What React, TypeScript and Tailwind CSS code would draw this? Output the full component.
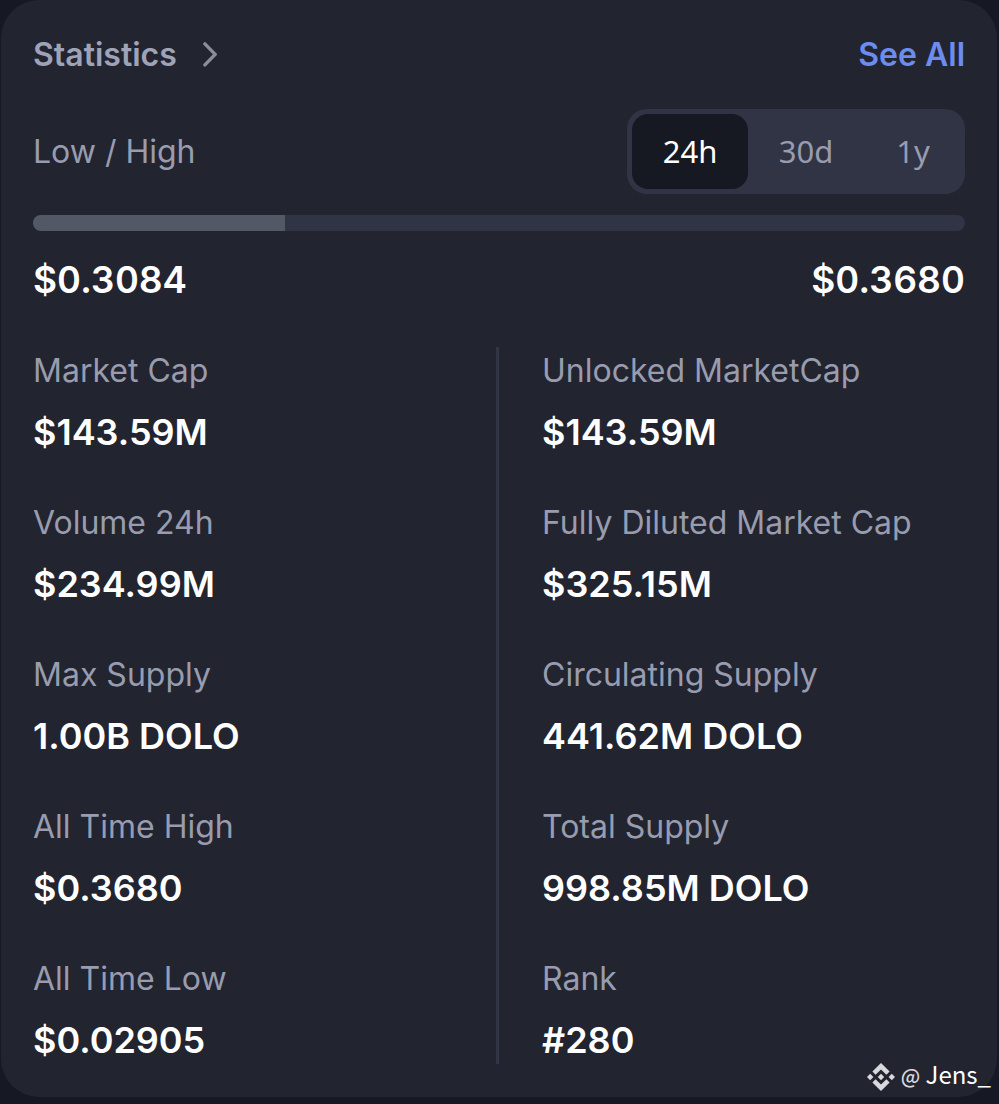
import { useState } from "react";

const ranges = [
  { id: "24h", label: "24h", width: "w-[116px]" },
  { id: "30d", label: "30d", width: "w-[116px]" },
  { id: "1y", label: "1y", width: "w-[98px]" },
];

const leftStats = [
  { label: "Market Cap", value: "$143.59M" },
  { label: "Volume 24h", value: "$234.99M" },
  { label: "Max Supply", value: "1.00B DOLO" },
  { label: "All Time High", value: "$0.3680" },
  { label: "All Time Low", value: "$0.02905" },
];

const rightStats = [
  { label: "Unlocked MarketCap", value: "$143.59M" },
  { label: "Fully Diluted Market Cap", value: "$325.15M" },
  { label: "Circulating Supply", value: "441.62M DOLO" },
  { label: "Total Supply", value: "998.85M DOLO" },
  { label: "Rank", value: "#280" },
];

function StatColumn({ items }: { items: { label: string; value: string }[] }) {
  return (
    <dl className="flex flex-col gap-[43px]">
      {items.map((s) => (
        <div key={s.label} className="flex flex-col gap-[13px] whitespace-nowrap">
          <dt className="text-[32px] leading-[48px] text-[#989cae]">{s.label}</dt>
          <dd className="text-[36px] leading-[48px] font-semibold text-white">
            {s.value}
          </dd>
        </div>
      ))}
    </dl>
  );
}

function DiamondLogo() {
  return (
    <svg viewBox="0 0 28 28" className="size-7" fill="#d8d9dc" aria-hidden="true">
      <path d="M14 0 22.6 8.6 19.4 11.8 14 6.4 8.6 11.8 5.4 8.6Z" />
      <path d="M14 28 5.4 19.4 8.6 16.2 14 21.6 19.4 16.2 22.6 19.4Z" />
      <path d="M14 10.8 17.2 14 14 17.2 10.8 14Z" />
      <path d="M3.2 10.8 6.4 14 3.2 17.2 0 14Z" />
      <path d="M24.8 10.8 28 14 24.8 17.2 21.6 14Z" />
    </svg>
  );
}

export default function App() {
  const [range, setRange] = useState("24h");

  return (
    <main className="relative min-h-screen bg-[#161823] pr-[2px] pb-[7px] pl-px font-['Inter',sans-serif]">
      <section className="rounded-[38px] bg-[#222430] px-8 pt-[31px] pb-[33px]">
        <header className="flex items-center justify-between text-[32px] leading-[48px] font-semibold">
          <h2 className="flex items-center gap-[26px] text-[#9fa3b7]">
            Statistics
            <svg
              viewBox="0 0 14 26"
              className="h-[26px] w-3.5"
              fill="none"
              stroke="#8b8d98"
              strokeWidth="3.4"
              strokeLinecap="round"
              strokeLinejoin="round"
              aria-hidden="true"
            >
              <path d="M1.9 1.9 12.2 12.4 1.9 22.9" />
            </svg>
          </h2>
          <a href="#all" className="text-[#6c8cee]">
            See All
          </a>
        </header>

        <div className="mt-[30px] flex items-center justify-between">
          <h3 className="text-[32px] leading-[48px] text-[#989cae]">Low / High</h3>
          <div className="flex rounded-[20px] bg-[#313445] py-[5px] pr-[3px] pl-[5px] font-['Noto_Sans',sans-serif]">
            {ranges.map((r) => (
              <button
                key={r.id}
                type="button"
                aria-pressed={range === r.id}
                onClick={() => setRange(r.id)}
                className={`h-[75px] rounded-2xl text-[31px] ${r.width} ${
                  range === r.id ? "bg-[#161822] text-white" : "text-[#989cae]"
                }`}
              >
                {r.label}
              </button>
            ))}
          </div>
        </div>

        <div className="mt-[21px] h-4 overflow-hidden rounded-full bg-[#313445]">
          <div className="h-full w-[27%] bg-[#535867]" />
        </div>

        <div className="mt-[25px] flex justify-between text-[37px] leading-[48px] font-semibold text-white tabular-nums">
          <span>$0.3084</span>
          <span>$0.3680</span>
        </div>

        <div className="mt-[43px] grid grid-cols-2">
          <div className="border-r-3 border-[#313445]">
            <StatColumn items={leftStats} />
          </div>
          <div className="pl-[43px]">
            <StatColumn items={rightStats} />
          </div>
        </div>
      </section>

      <div className="absolute right-2 bottom-2 flex items-center gap-1.5 font-['Noto_Sans_CJK_SC',sans-serif] text-2xl text-white">
        <DiamondLogo />
        <span className="pb-1 leading-8">
          <span className="text-[20px] font-medium text-[#d8d9dc]">@</span> Jens_
        </span>
      </div>
    </main>
  );
}
